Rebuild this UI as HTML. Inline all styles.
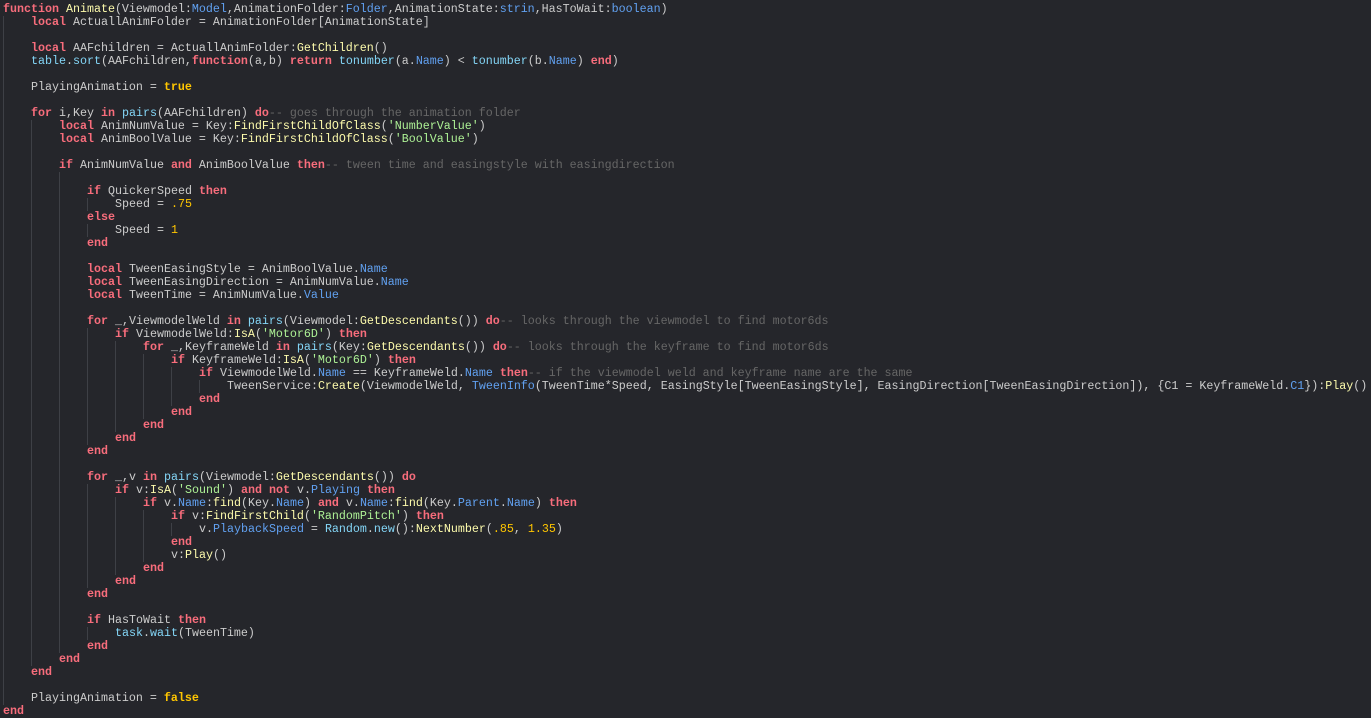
<!DOCTYPE html>
<html><head><meta charset="utf-8"><style>
html,body{margin:0;padding:0;background:#25262b;width:1371px;height:718px;overflow:hidden}
#c{position:absolute;left:3px;top:3px;font-family:"Liberation Mono",monospace;font-size:11.67px;color:#cccccc}
.l{height:13px;line-height:13px;white-space:pre}
.t{display:inline-block;width:28px;height:13px;vertical-align:top;box-sizing:border-box;border-left:1px solid #3e4046}
.k{color:#f86d7c;font-weight:bold}
.f{color:#fdfbac}
.p{color:#61a1f1}
.g{color:#84d6f7}
.s{color:#adf195}
.n{color:#ffc600}
.b{color:#ffc600;font-weight:bold}
.c{color:#666666}
</style></head><body><div id="c"><div class="l"><span class="k">function</span> <span class="f">Animate</span>(Viewmodel:<span class="p">Model</span>,AnimationFolder:<span class="p">Folder</span>,AnimationState:<span class="p">strin</span>,HasToWait:<span class="p">boolean</span>)</div>
<div class="l"><span class="t"></span><span class="k">local</span> ActuallAnimFolder = AnimationFolder[AnimationState]</div>
<div class="l"><span class="t"></span></div>
<div class="l"><span class="t"></span><span class="k">local</span> AAFchildren = ActuallAnimFolder:<span class="f">GetChildren</span>()</div>
<div class="l"><span class="t"></span><span class="g">table</span>.<span class="g">sort</span>(AAFchildren,<span class="k">function</span>(a,b) <span class="k">return</span> <span class="g">tonumber</span>(a.<span class="p">Name</span>) &lt; <span class="g">tonumber</span>(b.<span class="p">Name</span>) <span class="k">end</span>)</div>
<div class="l"><span class="t"></span></div>
<div class="l"><span class="t"></span>PlayingAnimation = <span class="b">true</span></div>
<div class="l"><span class="t"></span></div>
<div class="l"><span class="t"></span><span class="k">for</span> i,Key <span class="k">in</span> <span class="g">pairs</span>(AAFchildren) <span class="k">do</span><span class="c">-- goes through the animation folder</span></div>
<div class="l"><span class="t"></span><span class="t"></span><span class="k">local</span> AnimNumValue = Key:<span class="f">FindFirstChildOfClass</span>(<span class="s">'NumberValue'</span>)</div>
<div class="l"><span class="t"></span><span class="t"></span><span class="k">local</span> AnimBoolValue = Key:<span class="f">FindFirstChildOfClass</span>(<span class="s">'BoolValue'</span>)</div>
<div class="l"><span class="t"></span><span class="t"></span></div>
<div class="l"><span class="t"></span><span class="t"></span><span class="k">if</span> AnimNumValue <span class="k">and</span> AnimBoolValue <span class="k">then</span><span class="c">-- tween time and easingstyle with easingdirection</span></div>
<div class="l"><span class="t"></span><span class="t"></span><span class="t"></span></div>
<div class="l"><span class="t"></span><span class="t"></span><span class="t"></span><span class="k">if</span> QuickerSpeed <span class="k">then</span></div>
<div class="l"><span class="t"></span><span class="t"></span><span class="t"></span><span class="t"></span>Speed = <span class="n">.75</span></div>
<div class="l"><span class="t"></span><span class="t"></span><span class="t"></span><span class="k">else</span></div>
<div class="l"><span class="t"></span><span class="t"></span><span class="t"></span><span class="t"></span>Speed = <span class="n">1</span></div>
<div class="l"><span class="t"></span><span class="t"></span><span class="t"></span><span class="k">end</span></div>
<div class="l"><span class="t"></span><span class="t"></span><span class="t"></span></div>
<div class="l"><span class="t"></span><span class="t"></span><span class="t"></span><span class="k">local</span> TweenEasingStyle = AnimBoolValue.<span class="p">Name</span></div>
<div class="l"><span class="t"></span><span class="t"></span><span class="t"></span><span class="k">local</span> TweenEasingDirection = AnimNumValue.<span class="p">Name</span></div>
<div class="l"><span class="t"></span><span class="t"></span><span class="t"></span><span class="k">local</span> TweenTime = AnimNumValue.<span class="p">Value</span></div>
<div class="l"><span class="t"></span><span class="t"></span><span class="t"></span></div>
<div class="l"><span class="t"></span><span class="t"></span><span class="t"></span><span class="k">for</span> _,ViewmodelWeld <span class="k">in</span> <span class="g">pairs</span>(Viewmodel:<span class="f">GetDescendants</span>()) <span class="k">do</span><span class="c">-- looks through the viewmodel to find motor6ds</span></div>
<div class="l"><span class="t"></span><span class="t"></span><span class="t"></span><span class="t"></span><span class="k">if</span> ViewmodelWeld:<span class="f">IsA</span>(<span class="s">'Motor6D'</span>) <span class="k">then</span></div>
<div class="l"><span class="t"></span><span class="t"></span><span class="t"></span><span class="t"></span><span class="t"></span><span class="k">for</span> _,KeyframeWeld <span class="k">in</span> <span class="g">pairs</span>(Key:<span class="f">GetDescendants</span>()) <span class="k">do</span><span class="c">-- looks through the keyframe to find motor6ds</span></div>
<div class="l"><span class="t"></span><span class="t"></span><span class="t"></span><span class="t"></span><span class="t"></span><span class="t"></span><span class="k">if</span> KeyframeWeld:<span class="f">IsA</span>(<span class="s">'Motor6D'</span>) <span class="k">then</span></div>
<div class="l"><span class="t"></span><span class="t"></span><span class="t"></span><span class="t"></span><span class="t"></span><span class="t"></span><span class="t"></span><span class="k">if</span> ViewmodelWeld.<span class="p">Name</span> == KeyframeWeld.<span class="p">Name</span> <span class="k">then</span><span class="c">-- if the viewmodel weld and keyframe name are the same</span></div>
<div class="l"><span class="t"></span><span class="t"></span><span class="t"></span><span class="t"></span><span class="t"></span><span class="t"></span><span class="t"></span><span class="t"></span>TweenService:<span class="f">Create</span>(ViewmodelWeld, <span class="p">TweenInfo</span>(TweenTime*Speed, EasingStyle[TweenEasingStyle], EasingDirection[TweenEasingDirection]), {C1 = KeyframeWeld.<span class="p">C1</span>}):<span class="f">Play</span>()</div>
<div class="l"><span class="t"></span><span class="t"></span><span class="t"></span><span class="t"></span><span class="t"></span><span class="t"></span><span class="t"></span><span class="k">end</span></div>
<div class="l"><span class="t"></span><span class="t"></span><span class="t"></span><span class="t"></span><span class="t"></span><span class="t"></span><span class="k">end</span></div>
<div class="l"><span class="t"></span><span class="t"></span><span class="t"></span><span class="t"></span><span class="t"></span><span class="k">end</span></div>
<div class="l"><span class="t"></span><span class="t"></span><span class="t"></span><span class="t"></span><span class="k">end</span></div>
<div class="l"><span class="t"></span><span class="t"></span><span class="t"></span><span class="k">end</span></div>
<div class="l"><span class="t"></span><span class="t"></span><span class="t"></span></div>
<div class="l"><span class="t"></span><span class="t"></span><span class="t"></span><span class="k">for</span> _,v <span class="k">in</span> <span class="g">pairs</span>(Viewmodel:<span class="f">GetDescendants</span>()) <span class="k">do</span></div>
<div class="l"><span class="t"></span><span class="t"></span><span class="t"></span><span class="t"></span><span class="k">if</span> v:<span class="f">IsA</span>(<span class="s">'Sound'</span>) <span class="k">and</span> <span class="k">not</span> v.<span class="p">Playing</span> <span class="k">then</span></div>
<div class="l"><span class="t"></span><span class="t"></span><span class="t"></span><span class="t"></span><span class="t"></span><span class="k">if</span> v.<span class="p">Name</span>:<span class="f">find</span>(Key.<span class="p">Name</span>) <span class="k">and</span> v.<span class="p">Name</span>:<span class="f">find</span>(Key.<span class="p">Parent</span>.<span class="p">Name</span>) <span class="k">then</span></div>
<div class="l"><span class="t"></span><span class="t"></span><span class="t"></span><span class="t"></span><span class="t"></span><span class="t"></span><span class="k">if</span> v:<span class="f">FindFirstChild</span>(<span class="s">'RandomPitch'</span>) <span class="k">then</span></div>
<div class="l"><span class="t"></span><span class="t"></span><span class="t"></span><span class="t"></span><span class="t"></span><span class="t"></span><span class="t"></span>v.<span class="p">PlaybackSpeed</span> = <span class="g">Random</span>.<span class="g">new</span>():<span class="f">NextNumber</span>(<span class="n">.85</span>, <span class="n">1.35</span>)</div>
<div class="l"><span class="t"></span><span class="t"></span><span class="t"></span><span class="t"></span><span class="t"></span><span class="t"></span><span class="k">end</span></div>
<div class="l"><span class="t"></span><span class="t"></span><span class="t"></span><span class="t"></span><span class="t"></span><span class="t"></span>v:<span class="f">Play</span>()</div>
<div class="l"><span class="t"></span><span class="t"></span><span class="t"></span><span class="t"></span><span class="t"></span><span class="k">end</span></div>
<div class="l"><span class="t"></span><span class="t"></span><span class="t"></span><span class="t"></span><span class="k">end</span></div>
<div class="l"><span class="t"></span><span class="t"></span><span class="t"></span><span class="k">end</span></div>
<div class="l"><span class="t"></span><span class="t"></span><span class="t"></span></div>
<div class="l"><span class="t"></span><span class="t"></span><span class="t"></span><span class="k">if</span> HasToWait <span class="k">then</span></div>
<div class="l"><span class="t"></span><span class="t"></span><span class="t"></span><span class="t"></span><span class="g">task</span>.<span class="g">wait</span>(TweenTime)</div>
<div class="l"><span class="t"></span><span class="t"></span><span class="t"></span><span class="k">end</span></div>
<div class="l"><span class="t"></span><span class="t"></span><span class="k">end</span></div>
<div class="l"><span class="t"></span><span class="k">end</span></div>
<div class="l"><span class="t"></span></div>
<div class="l"><span class="t"></span>PlayingAnimation = <span class="b">false</span></div>
<div class="l"><span class="k">end</span></div></div></body></html>
